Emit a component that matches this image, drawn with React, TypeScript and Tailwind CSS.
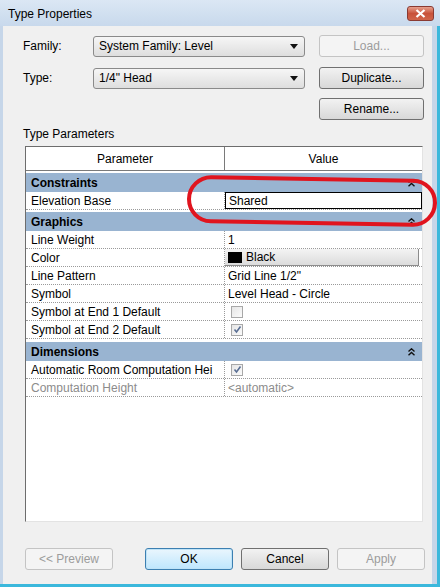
import React from "react";

const font = { fontFamily: '"Liberation Sans", Arial, sans-serif' };

function Combo({ text }: { text: string }) {
  return (
    <div className="flex h-[21px] w-[212px] items-center justify-between rounded-[3px] border border-[#8a8a8a] bg-gradient-to-b from-[#f6f6f6] to-[#dedede] pl-[5px] pr-[6px] text-[12px] text-black">
      <span>{text}</span>
      <svg width="8" height="5" viewBox="0 0 8 5">
        <path d="M0 0 H8 L4 5 Z" fill="#111" />
      </svg>
    </div>
  );
}

function Btn({
  label,
  w,
  disabled,
  primary,
}: {
  label: string;
  w: string;
  disabled?: boolean;
  primary?: boolean;
}) {
  const cls = disabled
    ? "border-[#c4c4c4] bg-[#f4f4f4] text-[#9c9c9c]"
    : primary
      ? "border-[#3c7fb1] bg-gradient-to-b from-[#eaf6fd] to-[#bee6fd] text-black shadow-[inset_0_0_0_1px_#bfe3f7]"
      : "border-[#707070] bg-gradient-to-b from-[#f2f2f2] to-[#d8d8d8] text-black";
  return (
    <div className={`flex h-[22px] items-center justify-center rounded-[3px] border text-[12px] ${w} ${cls}`}>
      {label}
    </div>
  );
}

function Chevrons() {
  return (
    <svg width="7" height="8" viewBox="0 0 7 8" className="mr-[7px]">
      <path d="M0.5 3.5 L3.5 0.8 L6.5 3.5 M0.5 7.2 L3.5 4.5 L6.5 7.2" stroke="#111" strokeWidth="1.4" fill="none" />
    </svg>
  );
}

function Group({ title, gap = "mt-[2px]" }: { title: string; gap?: string }) {
  return (
    <div className={`${gap} flex h-[19px] items-center justify-between bg-[#99b4d1] pl-[5px] text-[12px] font-bold text-black`}>
      <span>{title}</span>
      <Chevrons />
    </div>
  );
}

function Check({ on }: { on?: boolean }) {
  return (
    <div className="ml-[3px] flex h-[12px] w-[12px] items-center justify-center border border-[#a8a8a8] bg-gradient-to-br from-[#e6e6e6] to-[#fbfbfb]">
      {on && (
        <svg width="9" height="9" viewBox="0 0 9 9">
          <path d="M1.5 4.5 L3.5 7 L7.5 1.5" stroke="#5a6f94" strokeWidth="1.6" fill="none" />
        </svg>
      )}
    </div>
  );
}

function Row({
  name,
  value,
  grey,
}: {
  name: string;
  value: React.ReactNode;
  grey?: boolean;
}) {
  return (
    <div className={`flex h-[18px] border-b border-dotted border-[#9a9a9a] text-[12px] ${grey ? "text-[#8c8c8c]" : "text-black"}`}>
      <div className="flex w-[199px] items-center whitespace-nowrap border-r border-dotted border-[#9a9a9a] pl-[5px]">
        {name}
      </div>
      <div className="flex flex-1 items-center pl-[3px]">{value}</div>
    </div>
  );
}

export default function App() {
  return (
    <div className="relative flex h-[587px] w-[440px] flex-col bg-[#cddcee]" style={font}>
      {/* title bar */}
      <div className="flex h-[26px] shrink-0 items-start justify-between bg-gradient-to-b from-[#dbe7f4] to-[#c8d9ec]">
        <span className="ml-[8px] mt-[5px] text-[12px] text-black">Type Properties</span>
        <div className="mr-[6px] mt-[6px] flex h-[15px] w-[27px] items-center justify-center rounded-[3px] border border-[#8a3a32] bg-gradient-to-b from-[#e6a08e] via-[#c8523a] to-[#d0654a]">
          <svg width="11" height="9" viewBox="0 0 11 9">
            <path d="M1.5 1 L9.5 8 M9.5 1 L1.5 8" stroke="#fff" strokeWidth="2.2" />
          </svg>
        </div>
      </div>

      <div className="flex flex-1">
        <div className="w-[3px] bg-[#c6d6e9]" />
        <div className="flex flex-1 flex-col bg-[#f0f0f0] pl-[20px] text-[12px] text-black">
          {/* family / type */}
          <div className="mt-[9px] flex items-center">
            <span className="w-[70px]">Family:</span>
            <Combo text="System Family: Level" />
            <div className="ml-[14px]">
              <Btn label="Load..." w="w-[105px]" disabled />
            </div>
          </div>
          <div className="mt-[10px] flex items-center">
            <span className="w-[70px]">Type:</span>
            <Combo text={"1/4\" Head"} />
            <div className="ml-[14px]">
              <Btn label="Duplicate..." w="w-[105px]" />
            </div>
          </div>
          <div className="mt-[9px] flex justify-end pr-[8px]">
            <Btn label="Rename..." w="w-[105px]" />
          </div>

          <div className="mt-[7px] h-[15px] leading-[15px]">Type Parameters</div>

          {/* table */}
          <div className="ml-[2px] mt-[4px] flex h-[376px] w-[398px] flex-col border border-b-[#e3e3e3] border-l-[#6d6d6d] border-r-[#e3e3e3] border-t-[#6d6d6d] bg-white">
            <div className="flex h-[24px] border-b border-[#7a7a7a] text-[12px]">
              <div className="flex w-[199px] items-center justify-center border-r border-[#7a7a7a]">Parameter</div>
              <div className="flex flex-1 items-center justify-center">Value</div>
            </div>
            <Group title="Constraints" />
            <div className="flex h-[18px] border-b border-dotted border-[#9a9a9a] text-[12px]">
              <div className="flex w-[199px] items-center border-r border-dotted border-[#9a9a9a] pl-[5px]">Elevation Base</div>
              <div className="flex flex-1 items-center border border-black pl-[3px]">Shared</div>
            </div>
            <Group title="Graphics" />
            <Row name="Line Weight" value="1" />
            <Row
              name="Color"
              value={
                <div className="-ml-[3px] flex h-full w-full items-center border-b border-r border-[#8c8c8c] bg-gradient-to-b from-[#f4f4f4] to-[#dcdcdc] pl-[3px]">
                  <span className="mr-[4px] inline-block h-[11px] w-[14px] bg-black" />
                  Black
                </div>
              }
            />
            <Row name="Line Pattern" value={'Grid Line 1/2"'} />
            <Row name="Symbol" value="Level Head - Circle" />
            <Row name="Symbol at End 1 Default" value={<Check />} />
            <Row name="Symbol at End 2 Default" value={<Check on />} />
            <Group title="Dimensions" gap="mt-[3px]" />
            <Row name="Automatic Room Computation Hei" value={<Check on />} />
            <Row name="Computation Height" value="<automatic>" grey />
          </div>

          {/* bottom buttons */}
          <div className="ml-[2px] mt-[26px] flex">
            <Btn label="<< Preview" w="w-[88px]" disabled />
            <div className="ml-[32px]">
              <Btn label="OK" w="w-[88px]" primary />
            </div>
            <div className="ml-[8px]">
              <Btn label="Cancel" w="w-[88px]" />
            </div>
            <div className="ml-[8px]">
              <Btn label="Apply" w="w-[88px]" disabled />
            </div>
          </div>
        </div>
        <div className="w-[5px] bg-[#c6d6e9]" />
        <div className="w-[3px] bg-[#3bb8dc]" />
      </div>
      <div className="h-[3px] shrink-0 bg-[#3bb8dc]" />

      {/* red annotation ring */}
      <div className="pointer-events-none absolute left-[187px] top-[177px] h-[48px] w-[250px] rotate-[1deg] rounded-[24px] border-[4px] border-[#e0141e]" />
    </div>
  );
}
